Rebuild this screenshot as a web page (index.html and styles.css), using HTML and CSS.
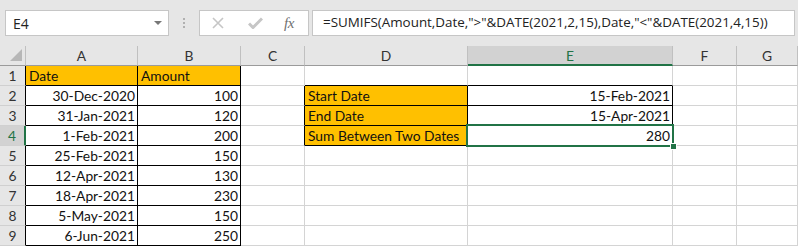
FILE: index.html
```html
<!DOCTYPE html>
<html>
<head>
<meta charset="utf-8">
<link rel="stylesheet" href="styles.css">
</head>
<body>
<div class="toolbar">
  <div class="namebox"><span class="ref">E4</span><span class="caret"></span></div>
  <div class="grip"><i></i><i></i><i></i></div>
  <div class="fxbox">
    <svg class="ico-x" width="12" height="12" viewBox="0 0 12 12"><path d="M1 1L11 11M11 1L1 11" stroke="#c6c6c6" stroke-width="1.6" fill="none"/></svg>
    <svg class="ico-ok" width="15" height="12" viewBox="0 0 15 12"><path d="M1 6.5L5 10.5L14 1.5" stroke="#c6c6c6" stroke-width="3" fill="none"/></svg>
    <span class="fx">fx</span>
  </div>
  <div class="formula">=SUMIFS(Amount,Date,"&gt;"&amp;DATE(2021,2,15),Date,"&lt;"&amp;DATE(2021,4,15))</div>
</div>
<div class="sheet">
  <div class="h corner"><span class="tri"></span></div>
  <div class="h col">A</div>
  <div class="h col">B</div>
  <div class="h col">C</div>
  <div class="h col">D</div>
  <div class="h col sel">E</div>
  <div class="h col">F</div>
  <div class="h col">G</div>

  <div class="h row bk">1</div>
  <div class="c fill br bb">Date</div>
  <div class="c fill br bb">Amount</div>
  <div class="c"></div>
  <div class="c bb"></div>
  <div class="c bb"></div>
  <div class="c"></div>
  <div class="c"></div>

  <div class="h row bk">2</div>
  <div class="c r br bb">30-Dec-2020</div>
  <div class="c r br bb">100</div>
  <div class="c br"></div>
  <div class="c fill br bb">Start Date</div>
  <div class="c r br bb">15-Feb-2021</div>
  <div class="c"></div>
  <div class="c"></div>

  <div class="h row bk">3</div>
  <div class="c r br bb">31-Jan-2021</div>
  <div class="c r br bb">120</div>
  <div class="c br"></div>
  <div class="c fill br bb">End Date</div>
  <div class="c r br bb">15-Apr-2021</div>
  <div class="c"></div>
  <div class="c"></div>

  <div class="h row bk selrow">4</div>
  <div class="c r br bb">1-Feb-2021</div>
  <div class="c r br bb">200</div>
  <div class="c br"></div>
  <div class="c fill br bb">Sum Between Two Dates</div>
  <div class="c r br bb active">280<span class="selbox"><span class="handle"></span></span></div>
  <div class="c"></div>
  <div class="c"></div>

  <div class="h row bk">5</div>
  <div class="c r br bb">25-Feb-2021</div>
  <div class="c r br bb">150</div>
  <div class="c"></div>
  <div class="c"></div>
  <div class="c"></div>
  <div class="c"></div>
  <div class="c"></div>

  <div class="h row bk">6</div>
  <div class="c r br bb">12-Apr-2021</div>
  <div class="c r br bb">130</div>
  <div class="c"></div>
  <div class="c"></div>
  <div class="c"></div>
  <div class="c"></div>
  <div class="c"></div>

  <div class="h row bk">7</div>
  <div class="c r br bb">18-Apr-2021</div>
  <div class="c r br bb">230</div>
  <div class="c"></div>
  <div class="c"></div>
  <div class="c"></div>
  <div class="c"></div>
  <div class="c"></div>

  <div class="h row bk">8</div>
  <div class="c r br bb">5-May-2021</div>
  <div class="c r br bb">150</div>
  <div class="c"></div>
  <div class="c"></div>
  <div class="c"></div>
  <div class="c"></div>
  <div class="c"></div>

  <div class="h row bk">9</div>
  <div class="c r br bb">6-Jun-2021</div>
  <div class="c r br bb">250</div>
  <div class="c"></div>
  <div class="c"></div>
  <div class="c"></div>
  <div class="c"></div>
  <div class="c"></div>
</div>
</body>
</html>
```
FILE: styles.css
```css
* { box-sizing: border-box; }
html, body { margin: 0; padding: 0; background: #fff; }
body { width: 798px; height: 246px; overflow: hidden; font-family: "Lato", "Open Sans", sans-serif; }

.toolbar {
  height: 46px;
  background: #e6e6e6;
  display: flex;
  align-items: flex-start;
  padding: 10px 0 0 5px;
}
.namebox {
  width: 164px;
  height: 26px;
  background: #fff;
  border: 1px solid #c6c6c6;
  display: flex;
  align-items: center;
  justify-content: space-between;
  padding: 0 6px 0 7px;
}
.ref { font-family: "Open Sans", sans-serif; font-size: 14px; color: #222; }
.caret {
  width: 0; height: 0;
  border-left: 4px solid transparent;
  border-right: 4px solid transparent;
  border-top: 4px solid #777;
}
.grip {
  width: 30px;
  height: 26px;
  display: flex;
  flex-direction: column;
  align-items: center;
  justify-content: center;
  gap: 2px;
}
.grip i { display: block; width: 2px; height: 2px; background: #b0b0b0; margin: 0; }
.fxbox {
  width: 110px;
  height: 26px;
  background: #fff;
  border: 1px solid #c6c6c6;
  display: flex;
  align-items: center;
  padding-left: 12px;
}
.ico-x { margin-right: 24px; }
.ico-ok { margin-right: 21px; }
.fx { font-family: "Liberation Serif", serif; font-style: italic; font-size: 15px; color: #707070; letter-spacing: -0.5px; }
.formula {
  margin-left: 3px;
  width: 483px;
  height: 26px;
  background: #fff;
  border: 1px solid #c6c6c6;
  font-family: "Open Sans", sans-serif;
  font-size: 13.4px;
  color: #222;
  padding-left: 10px;
  line-height: 23px;
  white-space: nowrap;
}

.sheet {
  display: grid;
  grid-template-columns: 26px 112px 103px 64px 163px 205px 64px 61px;
  grid-template-rows: repeat(10, 20px);
  font-size: 13.8px;
  color: #111;
}
.h {
  background: #e6e6e6;
  color: #333;
  display: flex;
  align-items: flex-end;
  justify-content: center;
  padding-bottom: 1px;
  line-height: 17px;
}
.corner { border-right: 1px solid #c0c0c0; border-bottom: 1px solid #9b9b9b; position: relative; }
.tri {
  position: absolute;
  right: 3px;
  bottom: 4px;
  width: 0; height: 0;
  border-left: 12px solid transparent;
  border-bottom: 12px solid #b7b7b7;
}
.col { border-right: 1px solid #c0c0c0; border-bottom: 1px solid #9b9b9b; }
.col.sel { background: #d2d2d2; color: #217346; border-bottom: 2px solid #217346; padding-bottom: 0; }
.row { border-right: 1px solid #9b9b9b; border-bottom: 1px solid #d0d0d0; }
.row.bk { border-right-color: #000; }
.row.selrow { background: #d2d2d2; color: #217346; border-right: 2px solid #217346; }

.c {
  border-right: 1px solid #d4d4d4;
  border-bottom: 1px solid #d4d4d4;
  display: flex;
  align-items: flex-end;
  padding: 0 2px 1px 3px;
  line-height: 17px;
  white-space: nowrap;
}
.c.r { justify-content: flex-end; }
.c.fill { background: #ffc000; }
.c.br { border-right-color: #000; }
.c.bb { border-bottom-color: #000; }
.active { position: relative; }
.selbox {
  position: absolute;
  left: -2px;
  top: -2px;
  right: -2px;
  bottom: -2px;
  border: 2px solid #217346;
}
.handle {
  position: absolute;
  right: -5px;
  bottom: -5px;
  width: 7px;
  height: 7px;
  background: #217346;
  border: 1px solid #fff;
}
```
